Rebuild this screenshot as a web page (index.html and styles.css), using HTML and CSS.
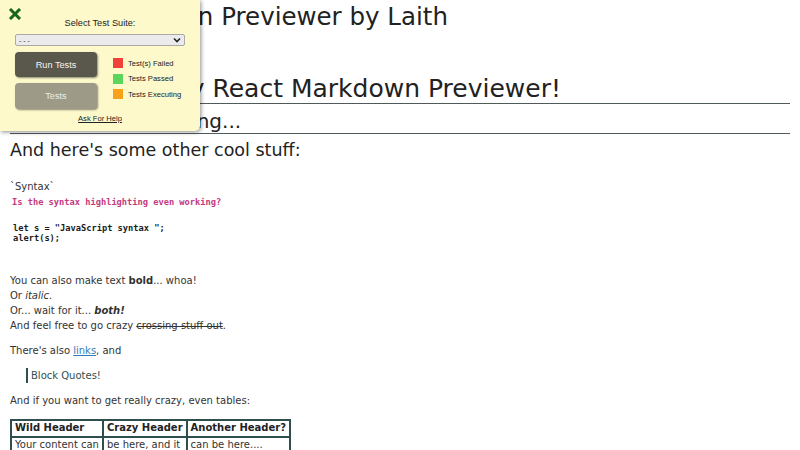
FILE: index.html
```html
<!DOCTYPE html>
<html lang="en">
<head>
  <meta charset="UTF-8">
  <meta name="viewport" content="width=device-width, initial-scale=1.0">
  <title>React Markdown Previewer by Laith</title>
  <link rel="stylesheet" href="styles.css">
</head>
<body>
  <div class="page">
    <h1 class="site-title">React Markdown Previewer by Laith</h1>

    <div id="preview">
      <h1>Welcome to my React Markdown Previewer!</h1>
      <h2>This is a sub-heading...</h2>
      <h3>And here's some other cool stuff:</h3>

      <p class="syntax">`Syntax`<br><code class="hl">Is the syntax highlighting even working?</code></p>

      <pre>let s = "JavaScript syntax ";
alert(s);</pre>

      <p>You can also make text <strong>bold</strong>... whoa!<br>
        Or <em>italic</em>.<br>
        Or... wait for it... <strong><em>both!</em></strong><br>
        And feel free to go crazy <del>crossing stuff out</del>.</p>

      <p>There's also <a href="#">links</a>, and</p>

      <blockquote>Block Quotes!</blockquote>

      <p>And if you want to get really crazy, even tables:</p>

      <table>
        <tr><th>Wild Header</th><th>Crazy Header</th><th>Another Header?</th></tr>
        <tr><td>Your content can</td><td>be here, and it</td><td>can be here....</td></tr>
        <tr><td>And here.</td><td>Okay.</td><td>I think we get it.</td></tr>
      </table>
    </div>
  </div>

  <!-- test suite overlay -->
  <div class="test-panel">
    <svg class="close-x" width="14" height="12" viewBox="0 0 14 12">
      <path d="M2 1 L12 11 M12 1 L2 11" stroke="#17661a" stroke-width="3" fill="none"/>
    </svg>
    <div class="panel-label">Select Test Suite:</div>
    <div class="fake-select">
      <span>- - -</span>
      <svg width="8" height="6" viewBox="0 0 8 6"><path d="M1 1.5 L4 4.5 L7 1.5" stroke="#222" stroke-width="1.6" fill="none"/></svg>
    </div>
    <div class="panel-body">
      <div class="panel-buttons">
        <button class="run-btn">Run Tests</button>
        <button class="tests-btn">Tests</button>
      </div>
      <ul class="legend">
        <li><span class="swatch failed"></span>Test(s) Failed</li>
        <li><span class="swatch passed"></span>Tests Passed</li>
        <li><span class="swatch running"></span>Tests Executing</li>
      </ul>
    </div>
    <a class="help-link" href="#">Ask For Help</a>
  </div>
</body>
</html>
```

FILE: styles.css
```css
body { margin: 0; font-family: "DejaVu Sans", Verdana, sans-serif; font-size: 10px; line-height: 15px; color: #333; background: #fff; }
.page { padding: 3px 10px 0; }
.site-title { margin: 0; font-size: 24.5px; line-height: 28px; font-weight: normal; color: #222; }

#preview h1, #preview h2, #preview h3 { font-weight: normal; color: #222; margin: 0; }
#preview h1 { margin-top: 43px; font-size: 25px; line-height: 29px; border-bottom: 1px solid #4f5b5b; }
#preview h2 { margin-top: 5px; font-size: 20px; line-height: 24px; border-bottom: 1px solid #4f5b5b; }
#preview h3 { margin-top: 6px; font-size: 17.5px; line-height: 20px; }
#preview p { margin: 0 0 10px; }
#preview .syntax { margin: 19px 0 0; }
.hl { font-family: "DejaVu Sans Mono", monospace; font-size: 8.7px; font-weight: bold; color: #c43a7e; padding-left: 2px; }
#preview pre { margin: 13px 0 30px; padding-left: 3px; font-family: "DejaVu Sans Mono", monospace; font-size: 8.7px; line-height: 10px; font-weight: bold; color: #1a1a1a; }
#preview a { color: #337ab7; }
#preview blockquote { margin: 0 0 10px 16px; padding-left: 3px; border-left: 2px solid #2f4f4f; color: #2f4f4f; }
#preview table { margin-top: 11px; border-collapse: collapse; border: 2px solid #2f4f4f; }
#preview th, #preview td { border: 2px solid #2f4f4f; padding: 0 3px 1px; line-height: 14px; text-align: left; white-space: nowrap; }
#preview th { font-weight: bold; color: #222; }

/* test suite overlay */
.test-panel { position: absolute; top: 0; left: 0; width: 200px; height: 131px; box-sizing: border-box; padding: 18px 15px 0; background: #fdf9cb; border-bottom-right-radius: 5px; box-shadow: 1px 1px 4px rgba(0, 0, 0, 0.45); font-family: "Liberation Sans", Arial, sans-serif; color: #222; }
.close-x { position: absolute; top: 8px; left: 8px; }
.panel-label { text-align: center; font-size: 9.2px; line-height: 11px; }
.fake-select { margin-top: 5px; height: 12px; box-sizing: border-box; display: flex; align-items: center; justify-content: space-between; padding: 0 3px; background: #ebebeb; border: 1px solid #a9a9a9; border-radius: 2px; font-size: 7px; color: #333; }
.panel-body { display: flex; gap: 16px; margin-top: 6px; }
.panel-buttons { display: flex; flex-direction: column; gap: 6px; }
.panel-buttons button { width: 82px; height: 25px; border: none; border-radius: 4px; font-family: inherit; font-size: 9.2px; box-shadow: 1px 1px 2px rgba(0, 0, 0, 0.45); cursor: pointer; }
.run-btn { background: #5a574c; color: #f4f4f4; }
.tests-btn { height: 26px !important; background: #9d9b88; color: #ecece4; }
.legend { list-style: none; margin: 6px 0 0; padding: 0; display: flex; flex-direction: column; gap: 5.5px; font-size: 7.6px; }
.legend li { display: flex; align-items: center; gap: 5px; height: 10px; }
.swatch { width: 10px; height: 10px; display: inline-block; }
.swatch.failed { background: #f0413a; }
.swatch.passed { background: #5bd65d; }
.swatch.running { background: #f9a11b; }
.help-link { display: block; width: max-content; margin: 2px auto 0; font-size: 7.6px; color: #222; }
```
